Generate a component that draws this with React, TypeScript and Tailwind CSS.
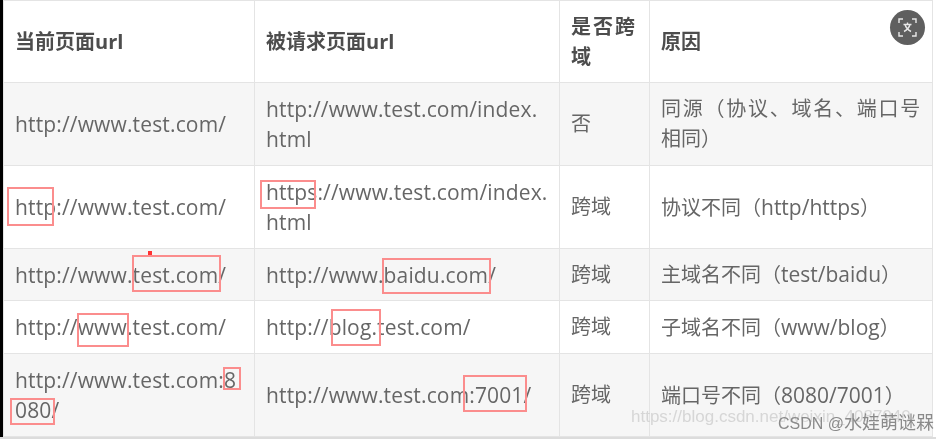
const cell = 'border border-[#e4e4e4] pl-[11px] pr-1 align-middle text-left'
const url = 'text-[21px] tracking-[0.15px]'
const latin = 'text-[21px]'

const marks = [
  'left-[7px] top-[187px] w-[47px] h-[39px]',
  'left-[260px] top-[180px] w-[56px] h-[29px]',
  'left-[132px] top-[255px] w-[89px] h-[37px]',
  'left-[382px] top-[258px] w-[109px] h-[36px]',
  'left-[77px] top-[313px] w-[52px] h-[34px]',
  'left-[331px] top-[309px] w-[50px] h-[37px]',
  'left-[223px] top-[367px] w-[18px] h-[23px]',
  'left-[10px] top-[398px] w-[45px] h-[27px]',
  'left-[463px] top-[375px] w-[64px] h-[37px]',
]

const rows = [
  { bg: 'bg-[#f6f6f6]', h: 'h-[83px]', a: <>http://www.test.com/</>, b: <>http://www.test.com/index.<br />html</>, c: '否', d: <><span className="tracking-[1.75px]">同源（协议、域名、端口号</span><br />相同）</> },
  { bg: 'bg-white', h: 'h-[83px]', a: <>http://www.test.com/</>, b: <>https://www.test.com/index.<br />html</>, c: '跨域', d: <>协议不同（<span className={latin}>http/https</span>）</> },
  { bg: 'bg-[#f6f6f6]', h: 'h-[52px]', a: <>http://www.test.com/</>, b: <>http://www.baidu.com/</>, c: '跨域', d: <>主域名不同（<span className={latin}>test/baidu</span>）</> },
  { bg: 'bg-white', h: 'h-[53px]', a: <>http://www.test.com/</>, b: <>http://blog.test.com/</>, c: '跨域', d: <>子域名不同（<span className={latin}>www/blog</span>）</> },
  { bg: 'bg-[#f6f6f6]', h: 'h-[83px]', a: <>http://www.test.com:8<br />080/</>, b: <>http://www.test.com:7001/</>, c: '跨域', d: <>端口号不同（<span className={latin}>8080/7001</span>）</> },
]

export default function App() {
  return (
    <div className="relative w-[936px] h-[439px] overflow-hidden bg-white font-['Open_Sans','Noto_Sans_CJK_SC',sans-serif]">
      {/* Table */}
      <div className="border-l-[3px] border-black w-[932px] blur-[0.4px]">
        <table className="table-fixed w-[929px] border-collapse text-[20px] leading-[30px] text-[#666]">
          <colgroup>
            <col className="w-[251px]" />
            <col className="w-[305px]" />
            <col className="w-[90px]" />
            <col className="w-[283px]" />
          </colgroup>
          <thead>
            <tr className="h-[82px] bg-white text-[#4d4d4d] font-bold">
              <th className={cell}>当前页面url</th>
              <th className={cell}>被请求页面url</th>
              <th className={cell + ' tracking-[2px]'}>是否跨域</th>
              <th className={cell}>原因</th>
            </tr>
          </thead>
          <tbody>
            {rows.map((r, i) => (
              <tr key={i} className={r.bg + ' ' + r.h}>
                <td className={cell + ' ' + url}>{r.a}</td>
                <td className={cell + ' ' + url}>{r.b}</td>
                <td className={cell}>{r.c}</td>
                <td className={cell}>{r.d}</td>
              </tr>
            ))}
          </tbody>
        </table>
      </div>

      {/* Red annotation boxes */}
      {marks.map((m) => (
        <div key={m} className={'absolute border-2 border-[#fb8d8d] ' + m} />
      ))}
      <div className="absolute left-[148px] top-[251px] w-[4px] h-[4px] bg-[#f33]" />

      {/* Translate button */}
      <div className="absolute left-[890px] top-[10px] w-[35px] h-[35px] rounded-full bg-[#5f5f5f] flex items-center justify-center">
        <svg width="19" height="19" viewBox="0 0 19 19" fill="none" stroke="#e8e8e8" strokeWidth="1.4">
          <path d="M1 5V1h4M14 1h4v4M18 14v4h-4M5 18H1v-4" />
          <path d="M5.5 6.5h8M9.5 4.5v2M7 6.5c.8 3 3 5.5 6 7M12 6.5c-.8 3-3 5.5-6 7" />
        </svg>
      </div>

      {/* Watermarks */}
      <div className="absolute left-[631px] top-[405px] text-[17px] leading-[24px] text-[#c9c9c9]/70 whitespace-nowrap font-['Liberation_Sans',sans-serif] blur-[0.5px]">
        https://blog.csdn.net/weixin_4087940
      </div>
      <div className="absolute left-[778px] top-[411px] w-[158px] overflow-hidden text-[16px] leading-[24px] text-[#8a8a8a] whitespace-nowrap font-['Liberation_Sans','Noto_Sans_CJK_SC',sans-serif] blur-[0.5px]">
        CSDN @<span className="text-[18px]">水娃萌谜槑</span>
      </div>

      {/* Bottom edge */}
      <div className="absolute left-0 right-0 bottom-0 h-[2px] bg-[#dcdcdc]" />
    </div>
  )
}
